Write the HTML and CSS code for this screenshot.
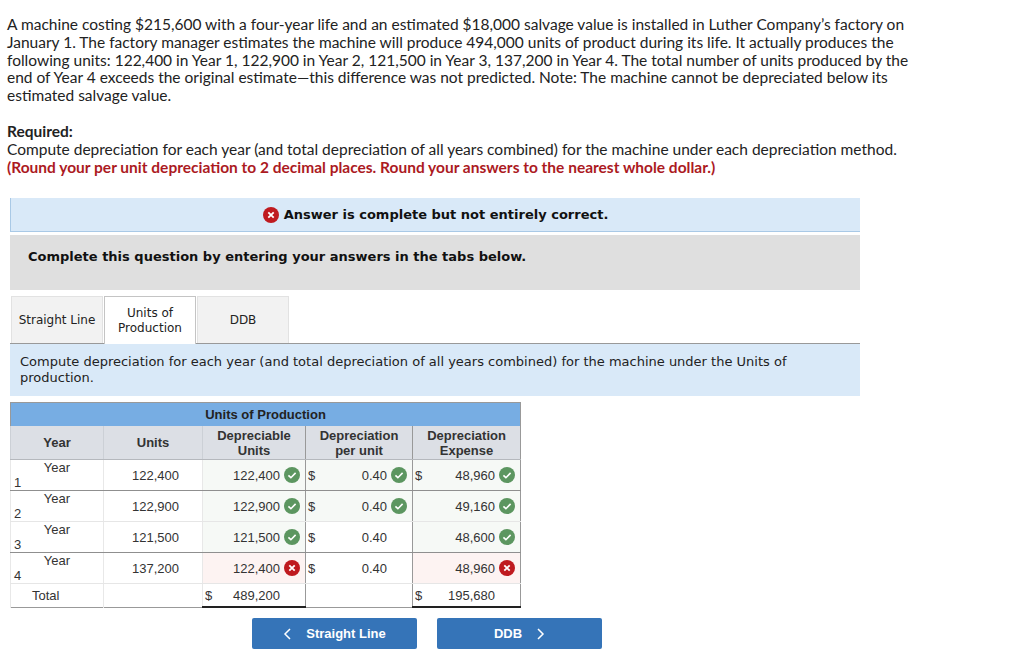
FILE: index.html
```html
<!DOCTYPE html>
<html>
<head>
  <title>Units of Production</title>
  <meta charset="UTF-8">
  <link rel="stylesheet" href="styles.css">
</head>
<body>
  <svg class="defs" width="0" height="0">
    <symbol id="ok" viewBox="0 0 16 16">
      <circle cx="8" cy="8" r="8" fill="#5c9660"/>
      <path d="M4.4 8.3l2.5 2.4 4.7-4.8" fill="none" stroke="#fff" stroke-width="1.6"/>
    </symbol>
    <symbol id="bad" viewBox="0 0 16 16">
      <circle cx="8" cy="8" r="8" fill="#bf1a1f"/>
      <path d="M5.3 5.3l5.4 5.4M10.7 5.3l-5.4 5.4" fill="none" stroke="#fff" stroke-width="1.8"/>
    </symbol>
  </svg>

  <div class="problem">
    <p>A machine costing $215,600 with a four-year life and an estimated $18,000 salvage value is installed in Luther Company’s factory on<br>January 1. The factory manager estimates the machine will produce 494,000 units of product during its life. It actually produces the<br>following units: 122,400 in Year 1, 122,900 in Year 2, 121,500 in Year 3, 137,200 in Year 4. The total number of units produced by the<br>end of Year 4 exceeds the original estimate—this difference was not predicted. Note: The machine cannot be depreciated below its<br>estimated salvage value.</p>
    <p class="required"><b>Required:</b><br>Compute depreciation for each year (and total depreciation of all years combined) for the machine under each depreciation method.<br><b class="red">(Round your per unit depreciation to 2 decimal places. Round your answers to the nearest whole dollar.)</b></p>
  </div>

  <div class="main">
    <div class="banner"><svg class="icon"><use href="#bad"/></svg> Answer is complete but not entirely correct.</div>
    <div class="instructions">Complete this question by entering your answers in the tabs below.</div>

    <div class="tabs">
      <div class="tab">Straight Line</div>
      <div class="tab active">Units of<br>Production</div>
      <div class="tab">DDB</div>
    </div>
    <div class="tab-text">Compute depreciation for each year (and total depreciation of all years combined) for the machine under the Units of production.</div>

    <table class="sheet">
      <colgroup>
        <col class="c1"><col class="c2"><col class="c3"><col class="c4"><col class="c5">
      </colgroup>
      <tr class="title"><th colspan="5">Units of Production</th></tr>
      <tr class="heads">
        <th>Year</th>
        <th>Units</th>
        <th>Depreciable<br>Units</th>
        <th class="dark-l">Depreciation<br>per unit</th>
        <th class="dark-l">Depreciation<br>Expense</th>
      </tr>
      <tr class="line-dark">
        <td class="year"><span class="y">Year</span><span class="n">1</span></td>
        <td class="num pad-units">122,400</td>
        <td class="good"><div class="cell"><span class="val">122,400</span><svg class="icon"><use href="#ok"/></svg></div></td>
        <td class="good dark-l"><div class="cell"><span class="cur">$</span><span class="val">0.40</span><svg class="icon"><use href="#ok"/></svg></div></td>
        <td class="good dark-l"><div class="cell"><span class="cur">$</span><span class="val">48,960</span><svg class="icon"><use href="#ok"/></svg></div></td>
      </tr>
      <tr>
        <td class="year"><span class="y">Year</span><span class="n">2</span></td>
        <td class="num pad-units">122,900</td>
        <td class="good"><div class="cell"><span class="val">122,900</span><svg class="icon"><use href="#ok"/></svg></div></td>
        <td class="good dark-l"><div class="cell"><span class="cur">$</span><span class="val">0.40</span><svg class="icon"><use href="#ok"/></svg></div></td>
        <td class="good dark-l"><div class="cell"><span class="val">49,160</span><svg class="icon"><use href="#ok"/></svg></div></td>
      </tr>
      <tr class="line-dark">
        <td class="year"><span class="y">Year</span><span class="n">3</span></td>
        <td class="num pad-units">121,500</td>
        <td class="good"><div class="cell"><span class="val">121,500</span><svg class="icon"><use href="#ok"/></svg></div></td>
        <td class="dark-l"><div class="cell"><span class="cur">$</span><span class="val">0.40</span><span class="icon"></span></div></td>
        <td class="good dark-l"><div class="cell"><span class="val">48,600</span><svg class="icon"><use href="#ok"/></svg></div></td>
      </tr>
      <tr>
        <td class="year"><span class="y">Year</span><span class="n">4</span></td>
        <td class="num pad-units">137,200</td>
        <td class="wrong"><div class="cell"><span class="val">122,400</span><svg class="icon"><use href="#bad"/></svg></div></td>
        <td class="dark-l"><div class="cell"><span class="cur">$</span><span class="val">0.40</span><span class="icon"></span></div></td>
        <td class="wrong dark-l"><div class="cell"><span class="val">48,960</span><svg class="icon"><use href="#bad"/></svg></div></td>
      </tr>
      <tr class="total">
        <td class="total-label">Total</td>
        <td></td>
        <td class="sum"><div class="cell"><span class="cur">$</span><span class="val">489,200</span><span class="icon"></span></div></td>
        <td class="dark-l"></td>
        <td class="sum dark-l"><div class="cell"><span class="cur">$</span><span class="val">195,680</span><span class="icon"></span></div></td>
      </tr>
    </table>

    <div class="nav">
      <div class="nav-btn"><span class="chev">
        <svg width="9" height="12" viewBox="0 0 9 12"><path d="M7 1L2 6l5 5" fill="none" stroke="#fff" stroke-width="1.5"/></svg>
      </span>Straight Line</div>
      <div class="nav-btn">DDB<span class="chev right">
        <svg width="9" height="12" viewBox="0 0 9 12"><path d="M2 1l5 5-5 5" fill="none" stroke="#fff" stroke-width="1.5"/></svg>
      </span></div>
    </div>
  </div>
</body>
</html>
```

FILE: styles.css
```css
body {
  margin: 0;
  background: #fff;
  color: #222;
  font-family: "Lato", "Liberation Sans", sans-serif;
}

.defs {
  display: block;
  height: 0;
}

.problem {
  padding: 16px 0 0 7px;
  font-size: 15.5px;
  line-height: 17.8px;
  white-space: nowrap;
}

.problem p {
  margin: 0;
}

.problem .required {
  margin-top: 18px;
}

.red {
  color: #ac1a1f;
}

.main {
  margin: 22px 0 0 10px;
  width: 850px;
  font-family: "DejaVu Sans", sans-serif;
}

.banner {
  height: 34px;
  box-sizing: border-box;
  background: #d9e9f8;
  border-left: 1px solid #a9c9e6;
  border-bottom: 1px solid #a9c9e6;
  display: flex;
  align-items: center;
  justify-content: center;
  gap: 5px;
  font-size: 13px;
  font-weight: bold;
  color: #111;
}

.icon {
  display: block;
  width: 16px;
  height: 16px;
  flex: none;
}

.instructions {
  margin-top: 3px;
  height: 55px;
  box-sizing: border-box;
  padding: 14px 0 0 18px;
  background: #dfdfdf;
  font-size: 13px;
  font-weight: bold;
  color: #111;
}

.tabs {
  display: flex;
  gap: 1px;
  margin-top: 6px;
  padding-left: 1px;
  border-bottom: 1px solid #999;
  height: 47px;
  box-sizing: content-box;
}

.tab {
  width: 92px;
  box-sizing: border-box;
  height: 47px;
  background: #f2f2f2;
  border: 1px solid #e2e2e2;
  border-bottom: none;
  display: flex;
  align-items: center;
  justify-content: center;
  text-align: center;
  font-size: 12px;
  line-height: 15px;
  color: #222;
}

.tab.active {
  background: #fff;
  border: 1px solid #c4c4c4;
  border-bottom: none;
  height: 48px;
  position: relative;
  z-index: 1;
}

.tab-text {
  background: #d9e9f8;
  height: 52px;
  box-sizing: border-box;
  padding: 10px 60px 0 10px;
  font-size: 13px;
  line-height: 16px;
  color: #222;
}

.sheet {
  margin-top: 6px;
  width: 510px;
  table-layout: fixed;
  border-collapse: collapse;
  border: 1px solid #999;
  font-family: "Liberation Sans", sans-serif;
  font-size: 13px;
  color: #333;
}

.c1 { width: 93px; }
.c2 { width: 99px; }
.c3 { width: 103px; }
.c4 { width: 107px; }
.c5 { width: 108px; }

.sheet th {
  padding: 0;
  font-weight: bold;
  line-height: 15px;
}

.title th {
  height: 23px;
  background: #77ade3;
  color: #222;
}

.heads th {
  height: 33px;
  background: #dcdfe5;
  border-left: 1px solid #ccd0d6;
  border-bottom: 1px solid #b5b8bd;
}

.sheet td {
  height: 30px;
  padding: 0;
  border-left: 1px solid #e8e8e8;
  border-bottom: 1px solid #e6e6e6;
  vertical-align: middle;
}

.sheet tr.line-dark td {
  border-bottom: 1px solid #8f8f8f;
}

.sheet th.dark-l,
.sheet td.dark-l {
  border-left: 1px solid #999;
}

.good {
  background: #f6f9f6;
}

.wrong {
  background: #fdf3f2;
}

.year {
  line-height: 15px;
}

.y {
  display: block;
  text-align: center;
}

.n {
  display: block;
  padding-left: 3px;
  color: #333;
}

.num {
  text-align: right;
}

.pad-units {
  padding-right: 23px !important;
}

.cell {
  display: flex;
  align-items: center;
  gap: 4px;
  padding: 0 5px 0 2px;
}

.val {
  margin-left: auto;
}

.total td {
  height: 22px;
  border-bottom: none;
}

.total-label {
  padding-left: 21px !important;
}

.sheet td.sum {
  border-bottom: 2px solid #222;
}

.nav {
  display: flex;
  justify-content: center;
  gap: 20px;
  margin-top: 10px;
  padding-right: 16px;
}

.nav-btn {
  width: 165px;
  height: 31px;
  background: #3574b8;
  border-radius: 2px;
  display: flex;
  align-items: center;
  justify-content: center;
  font-family: "Liberation Sans", sans-serif;
  font-size: 13px;
  font-weight: bold;
  color: #fff;
}

.chev {
  display: flex;
  margin-right: 14px;
}

.chev.right {
  margin-right: 0;
  margin-left: 14px;
}
```
